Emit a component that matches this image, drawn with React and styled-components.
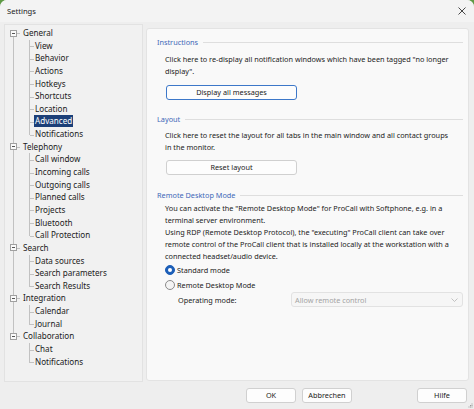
import React from 'react';
import styled, { createGlobalStyle } from 'styled-components';

const FONT = `"Noto Sans", "Open Sans", sans-serif`;

const Global = createGlobalStyle`
  html, body { margin: 0; padding: 0; background: #5f9a45; }
  #root { width: 474px; height: 409px; }
  * { box-sizing: border-box; }
`;

const Window = styled.div`
  position: relative;
  width: 474px;
  height: 409px;
  background: #eeeeee;
  border-radius: 7px 7px 0 0;
  overflow: hidden;
  display: flex;
  flex-direction: column;
  font-family: ${FONT};
  font-size: 7.3px;
  color: #1b1b1b;
`;

const TitleBar = styled.div`
  height: 22px;
  flex: none;
  display: flex;
  align-items: center;
  justify-content: space-between;
  padding: 0 8px 0 7px;
  background: #f3f3f3;
  font-size: 7.6px;
`;

const Main = styled.div`
  flex: 1;
  min-height: 0;
  display: flex;
  gap: 3px;
  padding: 2px 8px 0 4px;
`;

const TreePanel = styled.div`
  width: 139px;
  flex: none;
  background: #f1f1f1;
  border: 1px solid #e2e2e2;
  padding: 2px 0 0 0;
  position: relative;
  font-size: 8.1px;
`;

const Tree = styled.div`
  position: relative;
  &::before {
    content: '';
    position: absolute;
    left: 8px;
    top: 6px;
    height: 303px;
    border-left: 1px solid #c2c2c2;
  }
`;

const GroupRow = styled.div`
  position: relative;
  height: 12.65px;
  line-height: 12.65px;
  padding-left: 17px;
  white-space: nowrap;
`;

const Expander = styled.span`
  position: absolute;
  left: 5px;
  top: 2.5px;
  width: 7px;
  height: 7px;
  border: 1px solid #a0a0a0;
  background: #fafafa;
  z-index: 1;
  &::after {
    content: '';
    position: absolute;
    left: 1px;
    top: 2px;
    width: 3px;
    height: 1px;
    background: #555;
  }
`;

const GroupStub = styled.span`
  position: absolute;
  left: 12px;
  top: 6px;
  width: 3px;
  border-top: 1px solid #c2c2c2;
`;

const ChildRow = styled.div`
  position: relative;
  height: 12.65px;
  line-height: 12.65px;
  padding-left: 29px;
  white-space: nowrap;
  &::before {
    content: '';
    position: absolute;
    left: 24px;
    top: 0;
    height: ${p => (p.$last ? '7px' : '12.65px')};
    border-left: 1px solid #c2c2c2;
  }
  &::after {
    content: '';
    position: absolute;
    left: 25px;
    top: 6.5px;
    width: 4px;
    border-top: 1px solid #c2c2c2;
  }
`;

const Label = styled.span`
  display: inline-block;
  padding: 0 1px;
  line-height: 11.6px;
  background: ${p => (p.$selected ? '#1c3f78' : 'transparent')};
  color: ${p => (p.$selected ? '#ffffff' : '#1b1b1b')};
`;

const Panel = styled.div`
  flex: 1;
  margin: 4px 0 1px;
  background: #f9f9f9;
  border: 1px solid #e3e3e3;
  border-radius: 3px;
  padding: 7px 5px 0 10px;
  display: flex;
  flex-direction: column;
`;

const SectionHeader = styled.div`
  display: flex;
  align-items: center;
  gap: 5px;
  height: 12px;
  margin-top: ${p => p.$mt || 0}px;
  color: #4068b8;
  white-space: nowrap;
`;

const HeaderLine = styled.div`
  flex: 1;
  height: 1px;
  background: #dedede;
`;

const Paragraph = styled.div`
  margin-top: ${p => p.$mt || 0}px;
  padding-left: 8px;
  line-height: 12px;
  white-space: nowrap;
`;

const PushButton = styled.button`
  font-family: ${FONT};
  font-size: 7.3px;
  color: #1b1b1b;
  width: ${p => p.$w || 131}px;
  height: 15px;
  margin: ${p => p.$mt || 0}px 0 0 ${p => p.$ml || 0}px;
  padding: 0;
  background: #fdfdfd;
  border: 1px solid ${p => (p.$default ? '#3d78c9' : '#d0d0d0')};
  border-radius: 3px;
  line-height: 13px;
`;

const RadioRow = styled.label`
  display: flex;
  align-items: center;
  gap: 2px;
  height: 14px;
  padding-left: 8px;
  margin-top: ${p => p.$mt || 0}px;
`;

const RadioCircle = styled.span`
  width: 10px;
  height: 10px;
  border-radius: 50%;
  flex: none;
  background: ${p => (p.$checked ? '#1d5fb8' : '#f4f4f4')};
  border: 1px solid ${p => (p.$checked ? '#1d5fb8' : '#8a8a8a')};
  display: flex;
  align-items: center;
  justify-content: center;
  &::after {
    content: '';
    width: 4px;
    height: 4px;
    border-radius: 50%;
    background: #ffffff;
    display: ${p => (p.$checked ? 'block' : 'none')};
  }
`;

const FieldRow = styled.div`
  display: flex;
  align-items: center;
  height: 15px;
  padding-left: 21px;
`;

const FieldLabel = styled.span`
  width: 113px;
  flex: none;
`;

const Select = styled.div`
  width: 172px;
  height: 15px;
  display: flex;
  align-items: center;
  justify-content: space-between;
  padding: 0 4px 0 3px;
  background: #f6f6f6;
  border: 1px solid #e2e2e2;
  border-radius: 3px;
  color: #a3a3a3;
`;

const Footer = styled.div`
  height: 27px;
  flex: none;
  display: flex;
  align-items: flex-start;
  padding: 6px 7px 0 0;
  justify-content: flex-end;
  gap: 6px;
`;

const Spacer = styled.div`
  width: 53px;
`;

const Grip = styled.svg`
  position: absolute;
  right: 1px;
  bottom: 1px;
`;

const tree = [
  ['General', ['View', 'Behavior', 'Actions', 'Hotkeys', 'Shortcuts', 'Location', 'Advanced', 'Notifications']],
  ['Telephony', ['Call window', 'Incoming calls', 'Outgoing calls', 'Planned calls', 'Projects', 'Bluetooth', 'Call Protection']],
  ['Search', ['Data sources', 'Search parameters', 'Search Results']],
  ['Integration', ['Calendar', 'Journal']],
  ['Collaboration', ['Chat', 'Notifications']],
];

export default function App() {
  return (
    <>
      <Global />
      <Window>
        <TitleBar>
          <span>Settings</span>
          <svg width="8" height="8" viewBox="0 0 8 8">
            <path d="M0.5 0.5 L7.5 7.5 M7.5 0.5 L0.5 7.5" stroke="#333" strokeWidth="0.9" />
          </svg>
        </TitleBar>
        <Main>
          <TreePanel>
            <Tree>
              {tree.map(([group, children]) => (
                <div key={group}>
                  <GroupRow>
                    <Expander />
                    <GroupStub />
                    <Label>{group}</Label>
                  </GroupRow>
                  {children.map((c, i) => (
                    <ChildRow key={c} $last={i === children.length - 1}>
                      <Label $selected={group === 'General' && c === 'Advanced'}>{c}</Label>
                    </ChildRow>
                  ))}
                </div>
              ))}
            </Tree>
          </TreePanel>
          <Panel>
            <SectionHeader>
              <span>Instructions</span>
              <HeaderLine />
            </SectionHeader>
            <Paragraph $mt={5}>
              Click here to re-display all notification windows which have been tagged "no longer
              <br />
              display".
            </Paragraph>
            <PushButton $default $mt={8} $ml={9}>Display all messages</PushButton>
            <SectionHeader $mt={13}>
              <span>Layout</span>
              <HeaderLine />
            </SectionHeader>
            <Paragraph $mt={4}>
              Click here to reset the layout for all tabs in the main window and all contact groups
              <br />
              in the monitor.
            </Paragraph>
            <PushButton $mt={7} $ml={9}>Reset layout</PushButton>
            <SectionHeader $mt={14}>
              <span>Remote Desktop Mode</span>
              <HeaderLine />
            </SectionHeader>
            <Paragraph $mt={1}>
              You can activate the "Remote Desktop Mode" for ProCall with Softphone, e.g. in a
              <br />
              terminal server environment.
              <br />
              Using RDP (Remote Desktop Protocol), the "executing" ProCall client can take over
              <br />
              remote control of the ProCall client that is installed locally at the workstation with a
              <br />
              connected headset/audio device.
            </Paragraph>
            <RadioRow $mt={1}>
              <RadioCircle $checked />
              <span>Standard mode</span>
            </RadioRow>
            <RadioRow $mt={1}>
              <RadioCircle />
              <span>Remote Desktop Mode</span>
            </RadioRow>
            <FieldRow>
              <FieldLabel>Operating mode:</FieldLabel>
              <Select>
                <span>Allow remote control</span>
                <svg width="7" height="4" viewBox="0 0 7 4">
                  <path d="M0.5 0.5 L3.5 3.5 L6.5 0.5" stroke="#b5b5b5" strokeWidth="0.8" fill="none" />
                </svg>
              </Select>
            </FieldRow>
          </Panel>
        </Main>
        <Footer>
          <PushButton $w={50}>OK</PushButton>
          <PushButton $w={50}>Abbrechen</PushButton>
          <Spacer />
          <PushButton $w={50}>Hilfe</PushButton>
        </Footer>
        <Grip width="5" height="5" viewBox="0 0 5 5">
          <rect x="3.5" y="0.5" width="1" height="1" fill="#9a9a9a" />
          <rect x="2" y="2" width="1" height="1" fill="#9a9a9a" />
          <rect x="3.5" y="2" width="1" height="1" fill="#9a9a9a" />
          <rect x="0.5" y="3.5" width="1" height="1" fill="#9a9a9a" />
          <rect x="2" y="3.5" width="1" height="1" fill="#9a9a9a" />
          <rect x="3.5" y="3.5" width="1" height="1" fill="#9a9a9a" />
        </Grip>
      </Window>
    </>
  );
}
